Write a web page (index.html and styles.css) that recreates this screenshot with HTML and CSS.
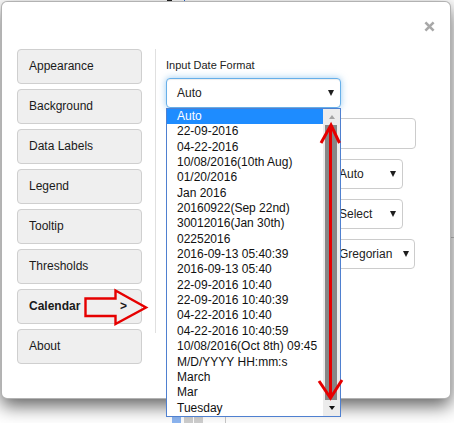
FILE: index.html
```html
<!DOCTYPE html>
<html lang="en">
<head>
<meta charset="utf-8">
<title>Chart Settings - Calendar</title>
<link rel="stylesheet" href="styles.css">
</head>
<body>
<div class="stage">
  <div class="page-bits">
    <span class="bit bit-top-dark"></span>
    <span class="bit bit-top-blue"></span>
    <span class="bit bit-sq-blue"></span>
    <span class="bit bit-sq-gray1"></span>
    <span class="bit bit-sq-gray2"></span>
    <span class="bit bit-vline"></span>
    <span class="bit bit-right-line"></span>
  </div>

  <div class="modal">
    <div class="modal-header">
      <button class="close" type="button" aria-label="Close">
        <svg width="11" height="11" viewBox="0 0 11 11"><path d="M1.4 1.4 L9.6 9.6 M9.6 1.4 L1.4 9.6" stroke="#a8a8a8" stroke-width="2.6" fill="none"/></svg>
      </button>
    </div>
    <div class="modal-body">
      <div class="nav">
        <div class="nav-btn">Appearance</div>
        <div class="nav-btn">Background</div>
        <div class="nav-btn">Data Labels</div>
        <div class="nav-btn">Legend</div>
        <div class="nav-btn">Tooltip</div>
        <div class="nav-btn">Thresholds</div>
        <div class="nav-btn active"><span>Calendar</span><span class="chev">&gt;</span></div>
        <div class="nav-btn">About</div>
      </div>
      <div class="panel">
        <div class="field-label">Input Date Format</div>
        <div class="select main-select"><span>Auto</span><i class="caret"></i></div>
        <div class="text-input"></div>
        <div class="row"><span class="row-spacer"></span><div class="select small-select"><span>Auto</span><i class="caret"></i></div></div>
        <div class="row"><span class="row-spacer"></span><div class="select small-select"><span>Select</span><i class="caret"></i></div></div>
        <div class="row"><span class="row-spacer"></span><div class="select wide-select"><span>Gregorian</span><i class="caret"></i></div></div>
      </div>
    </div>
  </div>

  <div class="listbox">
    <ul class="options">
      <li class="selected">Auto</li>
      <li>22-09-2016</li>
      <li>04-22-2016</li>
      <li>10/08/2016(10th Aug)</li>
      <li>01/20/2016</li>
      <li>Jan 2016</li>
      <li>20160922(Sep 22nd)</li>
      <li>30012016(Jan 30th)</li>
      <li>02252016</li>
      <li>2016-09-13 05:40:39</li>
      <li>2016-09-13 05:40</li>
      <li>22-09-2016 10:40</li>
      <li>22-09-2016 10:40:39</li>
      <li>04-22-2016 10:40</li>
      <li>04-22-2016 10:40:59</li>
      <li>10/08/2016(Oct 8th) 09:45</li>
      <li>M/D/YYYY HH:mm:s</li>
      <li>March</li>
      <li>Mar</li>
      <li>Tuesday</li>
    </ul>
    <div class="scrollbar">
      <div class="sb-btn"><i class="sb-up"></i></div>
      <div class="sb-thumb"></div>
      <div class="sb-btn"><i class="sb-down"></i></div>
    </div>
  </div>

  <svg class="annot" width="454" height="423" viewBox="0 0 454 423">
    <g stroke="#e60000" fill="none" stroke-linejoin="miter">
      <path d="M330.5 127 L330.5 396" stroke-width="3"/>
      <path d="M321 143 L331 125 L339.5 143" stroke-width="3"/>
      <path d="M319 381 L330.5 398 L342 380" stroke-width="3"/>
      <path d="M85.5 298.5 L115.5 298.5 L115.5 290.5 L146 307.5 L115.5 324 L115.5 316 L85.5 316 Z" stroke-width="2.4"/>
    </g>
  </svg>
</div>
</body>
</html>
```

FILE: styles.css
```css
* { box-sizing: border-box; }

html, body {
  margin: 0;
  padding: 0;
  background: #ffffff;
}

body {
  font-family: "Liberation Sans", Arial, sans-serif;
  color: #222;
}

.stage {
  position: relative;
  width: 454px;
  height: 423px;
  overflow: hidden;
  padding: 1px 0 0 1px;
}

/* page content peeking out behind the modal */
.page-bits .bit {
  position: absolute;
  display: block;
}
.bit-top-dark { left: 167px; top: 0; width: 5px; height: 2px; background: #222; }
.bit-top-blue { left: 184px; top: 0; width: 1px; height: 3px; background: #2a6ad8; }
.bit-sq-blue { left: 172px; top: 417px; width: 9px; height: 8px; background: #8db6f2; }
.bit-sq-gray1 { left: 184px; top: 417px; width: 9px; height: 8px; background: #cfcfcf; }
.bit-sq-gray2 { left: 194px; top: 417px; width: 9px; height: 8px; background: #cfcfcf; }
.bit-vline { left: 225px; top: 417px; width: 1px; height: 8px; background: #c8c8c8; }
.bit-right-line { left: 450px; top: 237px; width: 4px; height: 1px; background: #c8c8c8; }

.modal {
  position: relative;
  width: 450px;
  height: 398px;
  background: #fff;
  border: 1px solid rgba(0, 0, 0, 0.3);
  border-radius: 6px;
  box-shadow: 0 7px 18px rgba(0, 0, 0, 0.62);
}

.modal-header {
  height: 47px;
  display: flex;
  justify-content: flex-end;
  align-items: flex-start;
  padding: 19px 15px 0 0;
}

.close {
  display: block;
  width: 11px;
  height: 11px;
  padding: 0;
  margin: 0;
  border: 0;
  background: transparent;
  line-height: 0;
}

.modal-body {
  display: flex;
  align-items: flex-start;
  padding-left: 15px;
}

.nav {
  width: 125px;
  display: flex;
  flex-direction: column;
  gap: 5px;
}

.nav-btn {
  height: 35px;
  display: flex;
  align-items: center;
  justify-content: space-between;
  padding: 0 14px 1px 11px;
  background: #efefef;
  border: 1px solid #cfcfcf;
  border-radius: 4px;
  font-size: 12px;
  color: #1a1a1a;
}

.nav-btn.active {
  font-weight: bold;
}

.chev {
  font-weight: bold;
}

.panel {
  margin-left: 13px;
  width: 261px;
  height: 284px;
  border-left: 1px solid #e0e0e0;
  padding: 9px 0 0 10px;
}

.field-label {
  font-size: 11px;
  line-height: 14px;
  height: 14px;
  color: #222;
}

.select {
  height: 30px;
  display: flex;
  align-items: center;
  justify-content: space-between;
  border: 1px solid #ccc;
  border-radius: 4px;
  background: #fff;
  font-size: 12px;
  color: #222;
}

.caret {
  display: block;
  width: 0;
  height: 0;
  border-left: 3.5px solid transparent;
  border-right: 3.5px solid transparent;
  border-top: 6px solid #1e1e1e;
}

.main-select {
  margin-top: 6px;
  width: 175px;
  padding: 0 6px 0 10px;
  border-color: #66afe9;
  box-shadow: inset 0 1px 1px rgba(0, 0, 0, 0.075), 0 0 7px rgba(102, 175, 233, 0.65);
}

.text-input {
  margin-top: 10px;
  height: 31px;
  width: 250px;
  border: 1px solid #ccc;
  border-radius: 4px;
}

.row {
  display: flex;
  margin-top: 10px;
}

.row-spacer {
  width: 162px;
  flex: none;
}

.small-select {
  width: 75px;
  padding: 0 6px 0 10px;
}

.wide-select {
  width: 87px;
  padding: 0 5px 0 10px;
}

/* open dropdown overlay */
.listbox {
  position: absolute;
  left: 166px;
  top: 108px;
  width: 175px;
  height: 309px;
  border: 1px solid #4f80d0;
  background: #fff;
  display: flex;
  z-index: 5;
}

.options {
  list-style: none;
  margin: 0;
  padding: 0;
  width: 156px;
  flex: none;
}

.options li {
  height: 15.35px;
  line-height: 15px;
  padding-left: 10px;
  font-size: 12px;
  color: #111;
  white-space: nowrap;
}

.options li.selected {
  background: #1e8cff;
  color: #fff;
}

.scrollbar {
  width: 17px;
  flex: none;
  background: #ececec;
  display: flex;
  flex-direction: column;
}

.sb-btn {
  height: 16px;
  display: flex;
  align-items: center;
  justify-content: center;
}

.sb-up {
  display: block;
  width: 0;
  height: 0;
  border-left: 3.5px solid transparent;
  border-right: 3.5px solid transparent;
  border-bottom: 4px solid #a3a3a3;
}

.sb-down {
  display: block;
  width: 0;
  height: 0;
  border-left: 3.5px solid transparent;
  border-right: 3.5px solid transparent;
  border-top: 4px solid #111;
}

.sb-thumb {
  flex: 1;
  margin: 0 3px 0 2px;
  background: #878787;
}

.annot {
  position: absolute;
  left: 0;
  top: 0;
  z-index: 10;
  pointer-events: none;
}
```
